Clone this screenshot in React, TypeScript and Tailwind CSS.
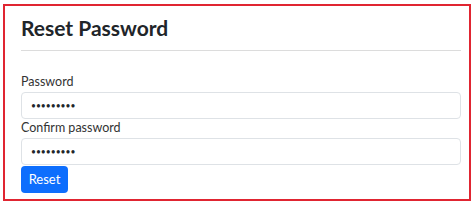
import { useState } from "react";

const ResetPassword = () => {
  const [password, setPassword] = useState("123456789");
  const [confirm, setConfirm] = useState("123456789");

  return (
    <div className="w-[474px] h-[203px] bg-white pt-[4px] pl-[3px] font-['Lato',sans-serif] text-[#212529]">
      <div className="w-[468px] h-[197px] border-2 border-[#e02531] pl-4 pr-[8px] pt-[9px]">
        <h1 className="text-[21px] leading-[26px] font-bold pb-[9px] border-b border-[#dcdcdc]">
          Reset Password
        </h1>

        <form className="flex flex-col mt-[23px]" onSubmit={(e) => e.preventDefault()}>
          <label className="text-[12.5px] leading-[16px] text-[#333]">Password</label>
          <input
            type="password"
            value={password}
            onChange={(e) => setPassword(e.target.value)}
            className="h-[27px] mt-[2px] px-[9px] rounded-[4px] border border-[#dee2e6] text-[8.5px] outline-none"
          />
          <label className="text-[12.5px] leading-[16px] text-[#333] mt-[1px]">Confirm password</label>
          <input
            type="password"
            value={confirm}
            onChange={(e) => setConfirm(e.target.value)}
            className="h-[27px] mt-[2px] px-[9px] rounded-[4px] border border-[#dee2e6] text-[8.5px] outline-none"
          />
          <div>
            <button
              type="submit"
              className="mt-[1px] h-[27px] w-[47px] rounded-[4px] bg-[#0d6efd] text-white text-[13px]"
            >
              Reset
            </button>
          </div>
        </form>
      </div>
    </div>
  );
};

export default ResetPassword;
